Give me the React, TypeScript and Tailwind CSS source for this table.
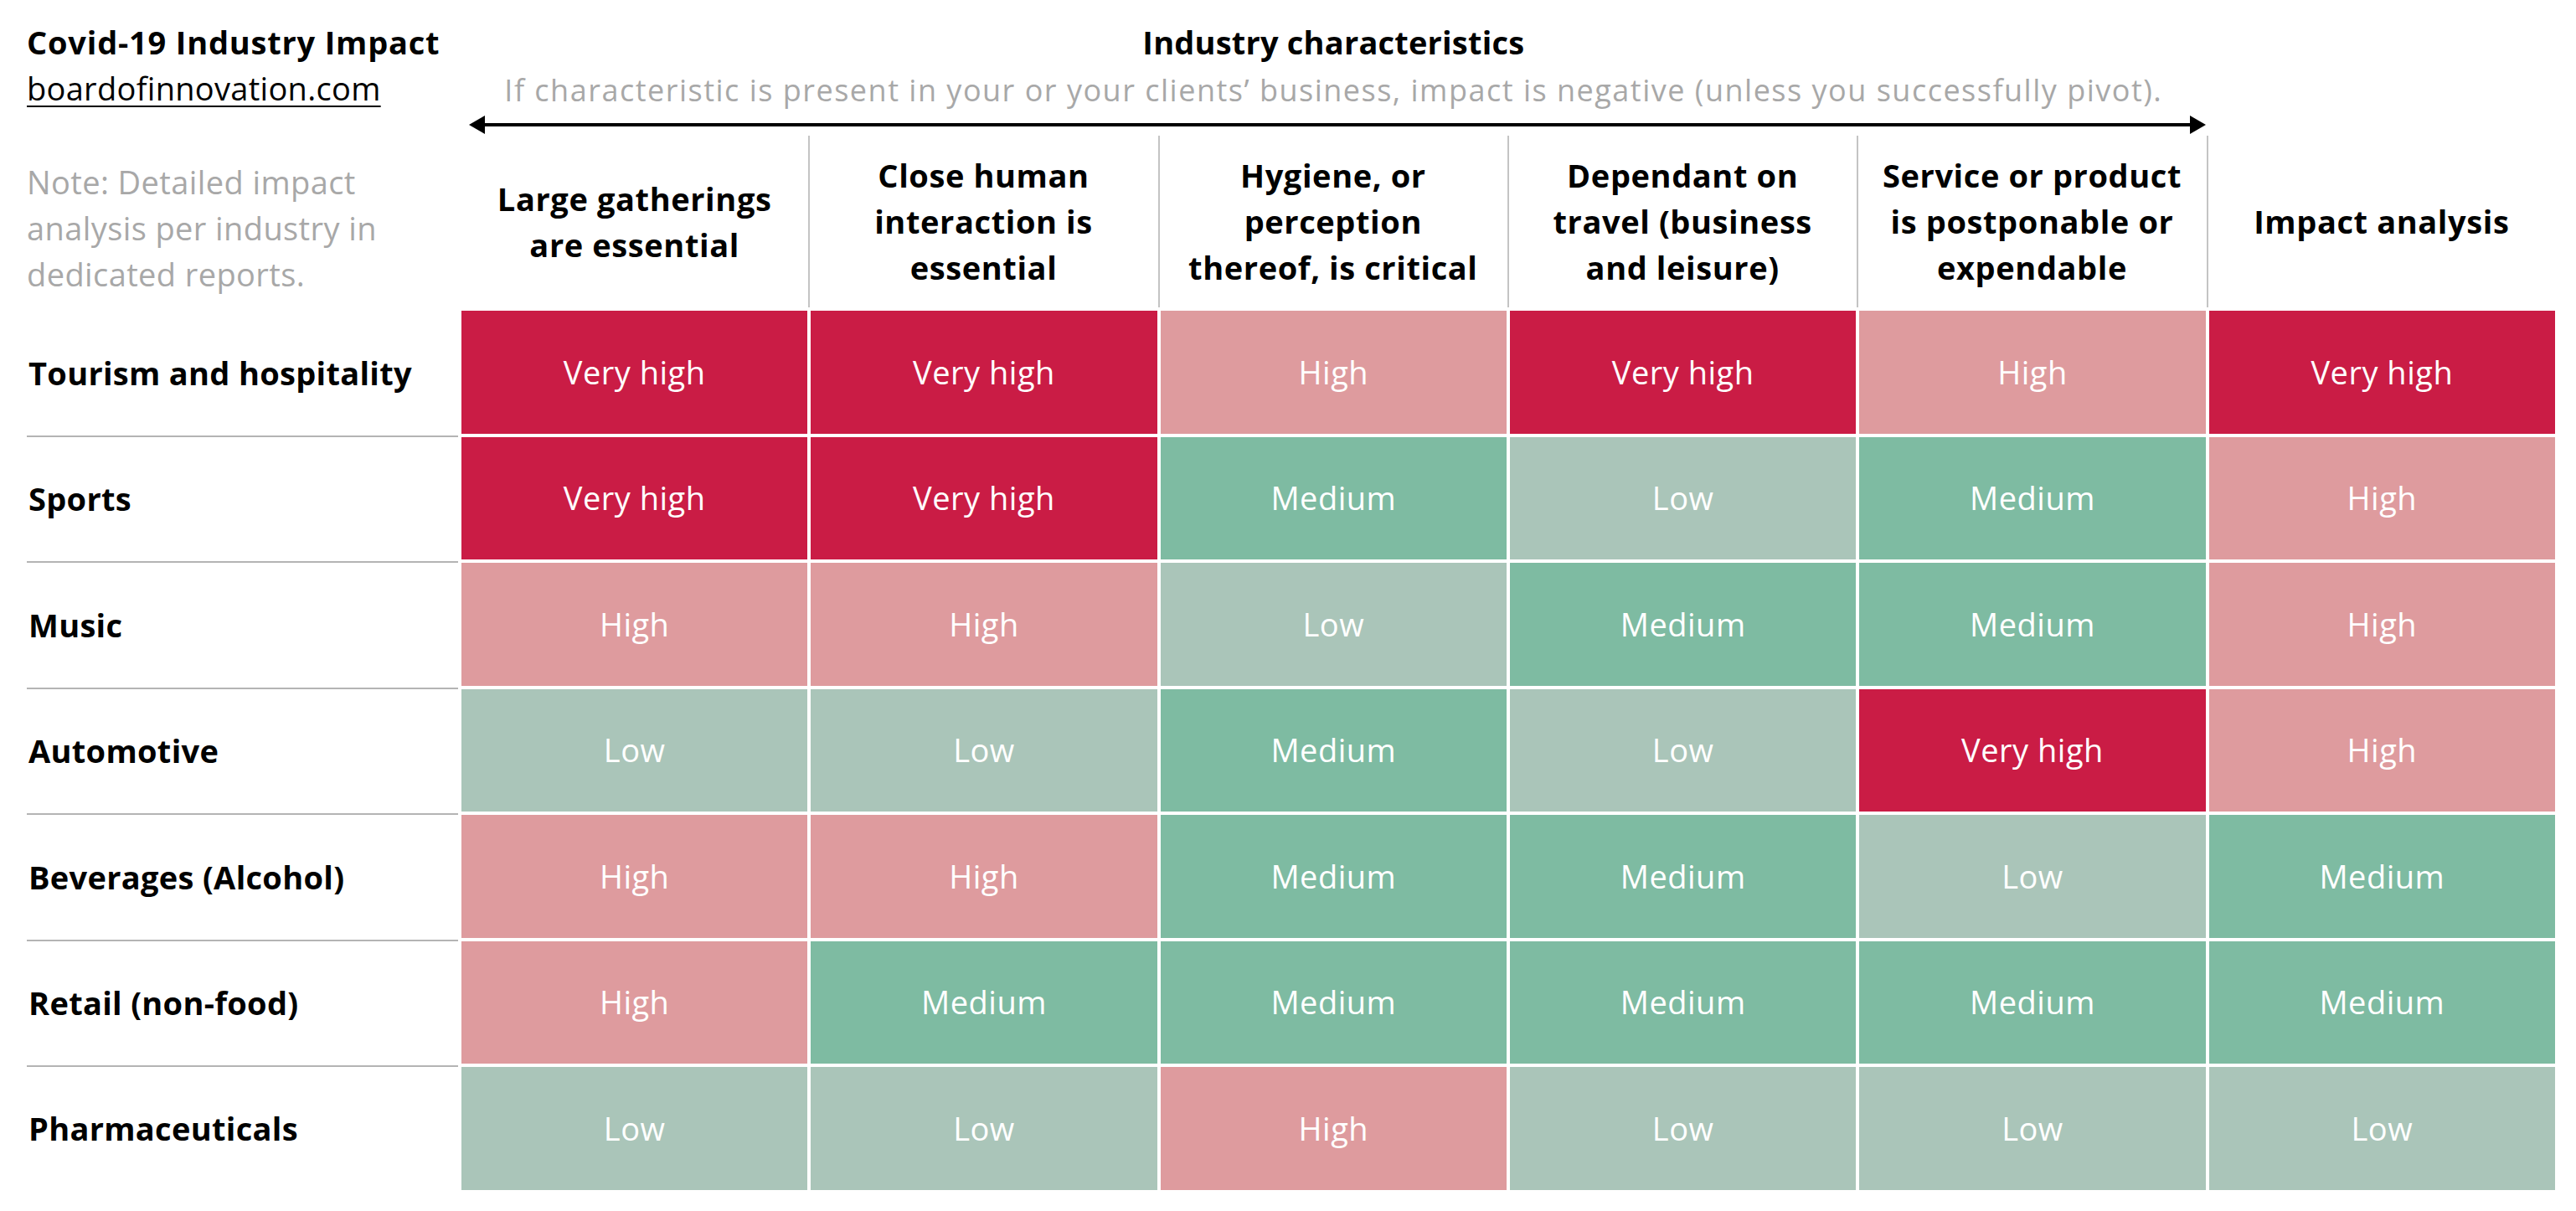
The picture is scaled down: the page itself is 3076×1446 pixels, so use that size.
import React from "react";

type Level = "vh" | "h" | "m" | "l";

const levelStyles: Record<Level, { bg: string; label: string }> = {
  vh: { bg: "bg-[#ca1c45]", label: "Very high" },
  h: { bg: "bg-[#de9b9e]", label: "High" },
  m: { bg: "bg-[#7ebba2]", label: "Medium" },
  l: { bg: "bg-[#aac5b9]", label: "Low" },
};

const headers: string[][] = [
  ["Large gatherings", "are essential"],
  ["Close human", "interaction is", "essential"],
  ["Hygiene, or", "perception", "thereof, is critical"],
  ["Dependant on", "travel (business", "and leisure)"],
  ["Service or product", "is postponable or", "expendable"],
  ["Impact analysis"],
];

const rows: { name: string; values: Level[] }[] = [
  { name: "Tourism and hospitality", values: ["vh", "vh", "h", "vh", "h", "vh"] },
  { name: "Sports", values: ["vh", "vh", "m", "l", "m", "h"] },
  { name: "Music", values: ["h", "h", "l", "m", "m", "h"] },
  { name: "Automotive", values: ["l", "l", "m", "l", "vh", "h"] },
  { name: "Beverages (Alcohol)", values: ["h", "h", "m", "m", "l", "m"] },
  { name: "Retail (non-food)", values: ["h", "m", "m", "m", "m", "m"] },
  { name: "Pharmaceuticals", values: ["l", "l", "h", "l", "l", "l"] },
];

function Arrow() {
  return (
    <svg width="2074" height="22" viewBox="0 0 2074 22" className="block">
      <line x1="16" y1="11" x2="2058" y2="11" stroke="#000" strokeWidth="4" />
      <polygon points="0,11 19,0 19,22" fill="#000" />
      <polygon points="2074,11 2055,0 2055,22" fill="#000" />
    </svg>
  );
}

export default function App() {
  return (
    <div className="w-[3076px] h-[1446px] overflow-hidden bg-white pr-[25px] font-['Open_Sans',sans-serif] text-[38px] leading-[55px] text-black">
      {/* header */}
      <div className="grid grid-cols-[547px_repeat(6,minmax(0,1fr))] grid-rows-[162px_205px] gap-x-1">
        <div className="row-span-2 pt-[23px] pl-[32px]">
          <div className="font-bold tracking-[0.8px]">Covid-19 Industry Impact</div>
          <div className="underline decoration-[2px] underline-offset-[6px] tracking-[0.3px]">boardofinnovation.com</div>
          <div className="mt-[57px] text-[#a8a8a8] tracking-[0.4px]">
            Note: Detailed impact
            <br />
            analysis per industry in
            <br />
            dedicated reports.
          </div>
        </div>
        <div className="col-span-5 flex flex-col items-center pt-[23px]">
          <div className="font-bold tracking-[0.2px]">Industry characteristics</div>
          <div className="mt-[4px] text-[36px] leading-[51px] tracking-[1.5px] text-[#a8a8a8] whitespace-nowrap">
            If characteristic is present in your or your clients’ business, impact is negative (unless you successfully pivot).
          </div>
          <div className="self-start pl-[9px] mt-[5px]">
            <Arrow />
          </div>
        </div>
        <div />
        {headers.map((lines, i) => (
          <div
            key={i}
            className={`flex flex-col items-center justify-center text-center font-bold tracking-[0.6px] whitespace-nowrap ${
              i > 0 ? "-ml-[3px] border-l-2 border-[#c4c4c4]" : ""
            }`}
          >
            {lines.map((l) => (
              <div key={l}>{l}</div>
            ))}
          </div>
        ))}
      </div>

      {/* table */}
      <div className="mt-1 flex flex-col gap-1">
        {rows.map((row, ri) => (
          <div key={row.name} className="grid grid-cols-[547px_repeat(6,minmax(0,1fr))] gap-x-1 h-[146.5px]">
            <div
              className={`ml-[32px] flex items-center pl-[2px] font-bold tracking-[0.3px] ${
                ri < rows.length - 1 ? "-mb-[4px] border-b-2 border-[#b4b4b4]" : ""
              }`}
            >
              {row.name}
            </div>
            {row.values.map((v, ci) => (
              <div
                key={ci}
                className={`flex items-center justify-center text-white tracking-[0.5px] ${levelStyles[v].bg}`}
              >
                {levelStyles[v].label}
              </div>
            ))}
          </div>
        ))}
      </div>
    </div>
  );
}
